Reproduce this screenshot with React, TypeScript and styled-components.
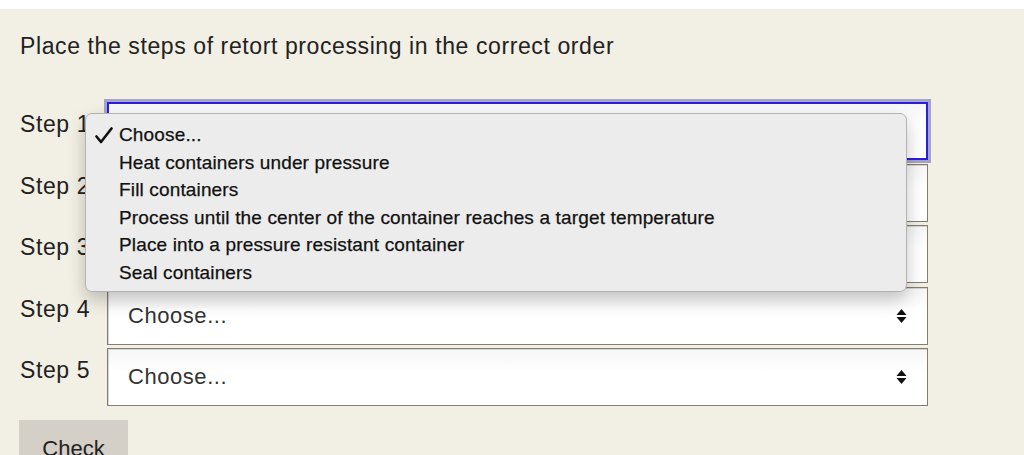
import React from "react"
import styled, { createGlobalStyle } from "styled-components"

const GlobalStyle = createGlobalStyle`
  html, body {
    margin: 0;
    padding: 0;
    background: #ffffff;
    font-family: "Liberation Sans", Arial, sans-serif;
  }
`

const Page = styled.main`
  margin-top: 9px;
  background: #f2efe4;
  padding: 24px 20px 20px 19px;
  min-height: 460px;
  box-sizing: border-box;
`

const Title = styled.h2`
  margin: 0 0 43px 1px;
  font-size: 23px;
  line-height: 26px;
  letter-spacing: 0.6px;
  font-weight: normal;
  color: #222;
`

const Steps = styled.div`
  display: flex;
  flex-direction: column;
  gap: 3.5px;
  width: 909px;
`

const Row = styled.div`
  position: relative;
  display: grid;
  grid-template-columns: 88px 1fr;
`

const StepLabel = styled.label`
  padding: 9px 0 0 1px;
  font-size: 23px;
  line-height: 26px;
  letter-spacing: 0.6px;
  color: #222;
  white-space: nowrap;
`

const SelectBox = styled.div<{ $focused?: boolean }>`
  position: relative;
  height: 58px;
  box-sizing: border-box;
  display: flex;
  align-items: center;
  justify-content: space-between;
  padding: 0 20px 0 20px;
  background: linear-gradient(#f6f6f6, #ffffff 40%);
  border: 1px solid #857c73;
  box-shadow: inset 1px 1px 0 #d8d4cf;
  font-size: 22px;
  letter-spacing: 0.55px;
  color: #333;
  ${(p) =>
    p.$focused &&
    `
    border: 2px solid #2b1ed8;
    box-shadow: 0 0 0 3px #a6a4c6;
  `}
`

const Arrows = styled.svg`
  width: 11px;
  height: 16px;
  flex: none;
`

const Menu = styled.ul`
  position: absolute;
  left: 66px;
  top: 11px;
  width: 822px;
  height: 179px;
  margin: 0;
  padding: 7px 0 0 0;
  box-sizing: border-box;
  list-style: none;
  background: #ececec;
  border: 1px solid #b4b2b0;
  border-radius: 7px;
  box-shadow: 0 8px 18px rgba(0, 0, 0, 0.22);
  z-index: 5;
`

const MenuItem = styled.li`
  position: relative;
  padding-left: 33px;
  height: 27.5px;
  line-height: 27.5px;
  font-size: 19px;
  letter-spacing: 0.15px;
  color: #111;
  -webkit-text-stroke: 0.25px #111;
  white-space: nowrap;
`

const Check = styled.svg`
  position: absolute;
  left: 9px;
  top: 6px;
  width: 18px;
  height: 17px;
`

const CheckButton = styled.button`
  margin-top: 14px;
  width: 109px;
  height: 50px;
  border: none;
  background: #d4cfc7;
  font-family: inherit;
  font-size: 22px;
  color: #222;
  padding: 8px 0 0 0;
`

const options = [
  "Choose...",
  "Heat containers under pressure",
  "Fill containers",
  "Process until the center of the container reaches a target temperature",
  "Place into a pressure resistant container",
  "Seal containers",
]

const UpDown = () => (
  <Arrows viewBox="0 0 11 16">
    <path d="M5.5 1 L10.5 7 L0.5 7 Z" fill="#111" />
    <path d="M5.5 15 L10.5 9 L0.5 9 Z" fill="#111" />
  </Arrows>
)

const App: React.FC = () => {
  return (
    <>
      <GlobalStyle />
      <Page>
        <Title>Place the steps of retort processing in the correct order</Title>
        <Steps>
          {[1, 2, 3, 4, 5].map((n) => (
            <Row key={n}>
              <StepLabel>Step {n}</StepLabel>
              {n === 1 ? (
                <SelectBox $focused />
              ) : (
                <SelectBox>
                  <span>Choose...</span>
                  <UpDown />
                </SelectBox>
              )}
              {n === 1 && (
                <Menu>
                  {options.map((o, i) => (
                    <MenuItem key={o}>
                      {i === 0 && (
                        <Check viewBox="0 0 18 17">
                          <path
                            d="M1.5 9.5 L6 15 L16.5 1.5"
                            fill="none"
                            stroke="#111"
                            strokeWidth="2.6"
                            strokeLinecap="round"
                            strokeLinejoin="round"
                          />
                        </Check>
                      )}
                      {o}
                    </MenuItem>
                  ))}
                </Menu>
              )}
            </Row>
          ))}
        </Steps>
        <CheckButton>Check</CheckButton>
      </Page>
    </>
  )
}

export default App
